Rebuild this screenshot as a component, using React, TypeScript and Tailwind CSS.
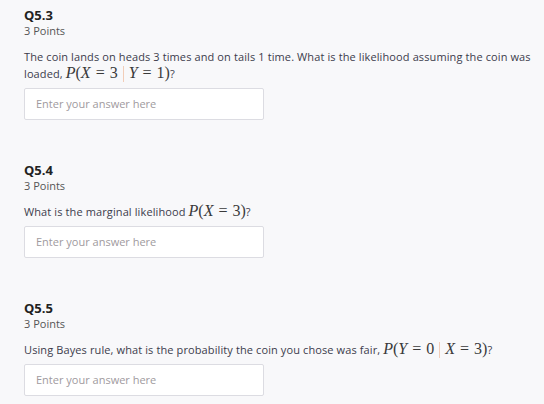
import React from "react";

function M({ children }: { children: React.ReactNode }) {
  return (
    <span className="text-[16px] leading-none tracking-normal text-[#3a3a3a] [font-family:'Liberation_Serif',serif]">{children}</span>
  );
}
const I = ({ c }: { c: string }) => <i className="italic">{c}</i>;
const Bar = () => <span className="inline-block w-[1px] h-[16px] bg-[#f2cdb8] align-[-4px] mx-[5px]" />;
const Eq = () => <span className="mx-[5px]">=</span>;

function Question({
  id,
  children,
  mt,
}: {
  id: string;
  children: React.ReactNode;
  mt: string;
}) {
  return (
    <div className={`flex flex-col ${mt}`}>
      <div className="text-[13px] font-bold text-[#222] leading-[16px]">{id}</div>
      <div className="text-[11px] text-[#555] leading-[15px]">3 Points</div>
      <div className="text-[11px] tracking-[0.11px] whitespace-nowrap text-[#3c3c4c] leading-[17px] mt-[10px]">{children}</div>
      <div className="mt-[6px] w-[240px] h-[32px] bg-white border border-[#dcdce2] rounded-[2px] flex items-center px-[11px] text-[11px] text-[#a09a9e]">
        Enter your answer here
      </div>
    </div>
  );
}

export default function App() {
  return (
    <div className="w-[544px] h-[404px] bg-[#f8f8fa] px-[24px] pt-[7px] [font-family:'Open_Sans',sans-serif] overflow-hidden">
      <Question id="Q5.3" mt="mt-0">
        The coin lands on heads 3 times and on tails 1 time. What is the likelihood assuming the coin was
        <br />
        loaded,{" "}
        <M>
          <I c="P" />(<I c="X" />
          <Eq />3<Bar />
          <I c="Y" />
          <Eq />1)
        </M>
        ?
      </Question>
      <Question id="Q5.4" mt="mt-[42px]">
        What is the marginal likelihood{" "}
        <M>
          <I c="P" />(<I c="X" />
          <Eq />3)
        </M>
        ?
      </Question>
      <Question id="Q5.5" mt="mt-[42px]">
        Using Bayes rule, what is the probability the coin you chose was fair,{" "}
        <M>
          <I c="P" />(<I c="Y" />
          <Eq />0<Bar />
          <I c="X" />
          <Eq />3)
        </M>
        ?
      </Question>
    </div>
  );
}
